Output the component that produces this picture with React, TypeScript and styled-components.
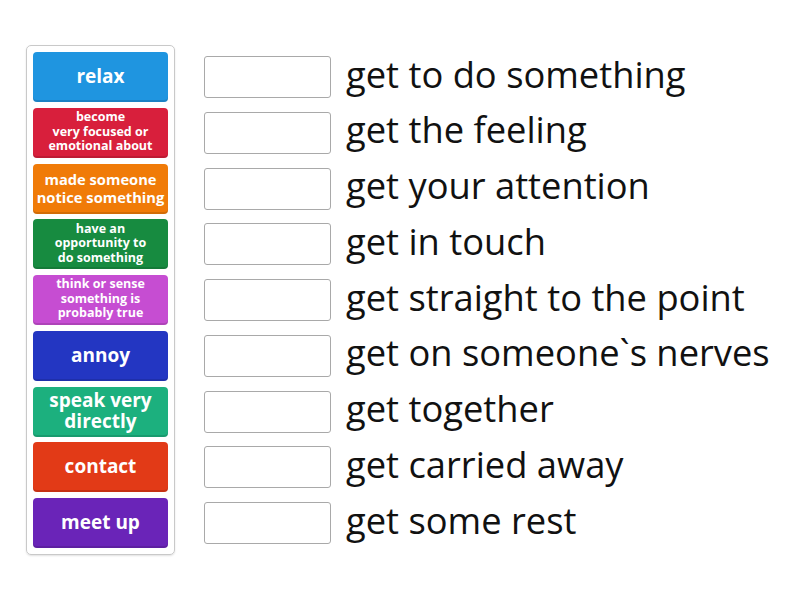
import React from "react";
import styled, { createGlobalStyle } from "styled-components";

const Global = createGlobalStyle`
  html, body { margin: 0; padding: 0; background: #fff; }
  body { font-family: "Open Sans", "Liberation Sans", sans-serif; width: 800px; height: 600px; overflow: hidden; }
`;

const Page = styled.div`
  display: flex;
  align-items: flex-start;
  padding: 45px 0 0 26px;
  gap: 29px;
`;

const Tray = styled.div`
  width: 135px;
  padding: 6px;
  border: 1px solid #c9c9c9;
  border-radius: 5px;
  display: flex;
  flex-direction: column;
  gap: 5.75px;
  box-shadow: 0 1px 2px rgba(0,0,0,0.12);
`;

const Tile = styled.div<{ $bg: string; $size: number; $lh: number }>`
  height: 50px;
  border-radius: 4px;
  background: ${p => p.$bg};
  color: #fff;
  font-weight: 700;
  font-size: ${p => p.$size}px;
  line-height: ${p => p.$lh}px;
  display: flex;
  align-items: center;
  justify-content: center;
  text-align: center;
  padding: 0 1px 2px;
  box-sizing: border-box;
  box-shadow: inset 0 -2px 0 rgba(0,0,0,0.12);
  white-space: nowrap;
`;

const Rows = styled.div`
  display: flex;
  flex-direction: column;
  padding-top: 11px;
  gap: 13.75px;
`;

const Row = styled.div`
  display: flex;
  align-items: center;
  gap: 15px;
  height: 42px;
`;

const Slot = styled.div`
  width: 127px;
  height: 42px;
  box-sizing: border-box;
  border: 1px solid #a9a9a9;
  border-radius: 3px;
  background: #fff;
  flex-shrink: 0;
`;

const Phrase = styled.div`
  font-size: 36.3px;
  color: #111;
  white-space: nowrap;
  line-height: 42px;
  margin-top: -7px;
`;

const tiles: { text: React.ReactNode; bg: string; size: number; lh: number }[] = [
  { text: "relax", bg: "#1f95e0", size: 19, lh: 22 },
  { text: <>become<br />very focused or<br />emotional about</>, bg: "#d81f3c", size: 12.5, lh: 14.5 },
  { text: <>made someone<br />notice something</>, bg: "#f07b08", size: 14.7, lh: 18 },
  { text: <>have an<br />opportunity to<br />do something</>, bg: "#178b40", size: 12.5, lh: 14.5 },
  { text: <>think or sense<br />something is<br />probably true</>, bg: "#c64dd2", size: 12.5, lh: 14.5 },
  { text: "annoy", bg: "#2336c2", size: 19, lh: 22 },
  { text: <>speak very<br />directly</>, bg: "#1cb07e", size: 19, lh: 21 },
  { text: "contact", bg: "#e23a17", size: 19, lh: 22 },
  { text: "meet up", bg: "#6a24b8", size: 19, lh: 22 },
];

const phrases = [
  "get to do something",
  "get the feeling",
  "get your attention",
  "get in touch",
  "get straight to the point",
  "get on someone`s nerves",
  "get together",
  "get carried away",
  "get some rest",
];

export default function App() {
  return (
    <>
      <Global />
      <Page>
        <Tray>
          {tiles.map((t, i) => (
            <Tile key={i} $bg={t.bg} $size={t.size} $lh={t.lh}>{t.text}</Tile>
          ))}
        </Tray>
        <Rows>
          {phrases.map(p => (
            <Row key={p}>
              <Slot />
              <Phrase>{p}</Phrase>
            </Row>
          ))}
        </Rows>
      </Page>
    </>
  );
}
